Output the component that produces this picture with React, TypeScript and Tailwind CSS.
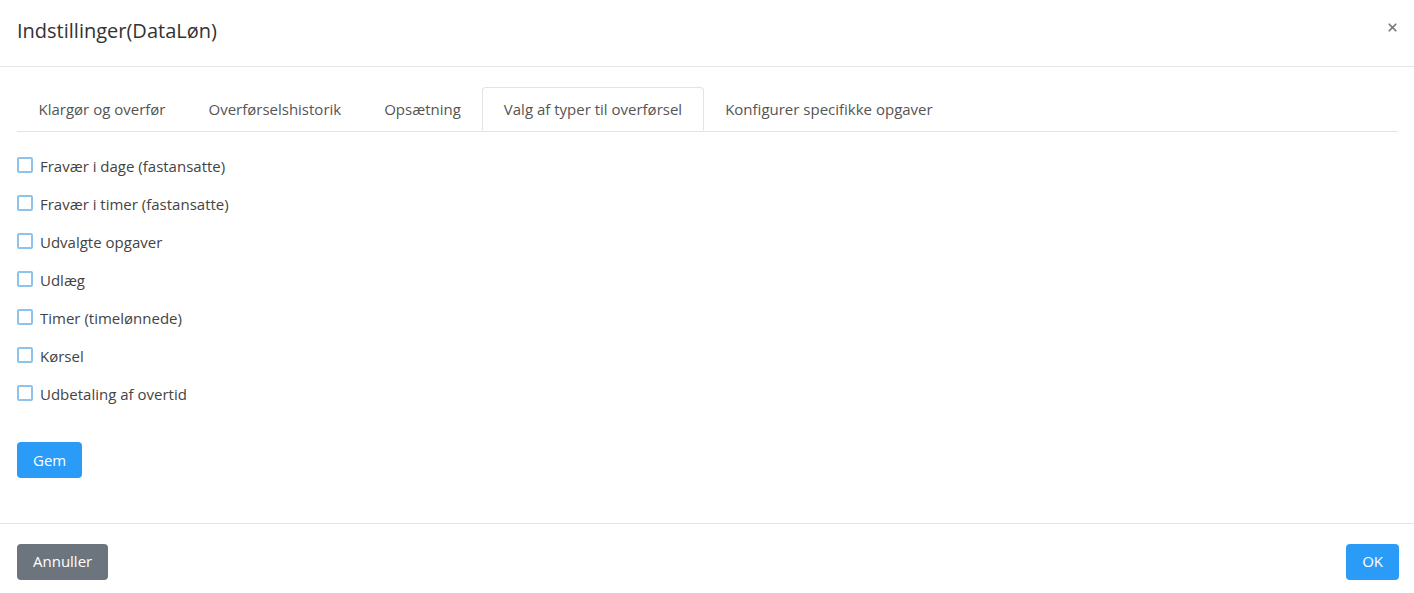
import { X } from "lucide-react";

const tabs = [
  "Klargør og overfør",
  "Overførselshistorik",
  "Opsætning",
  "Valg af typer til overførsel",
  "Konfigurer specifikke opgaver",
];

const types = [
  "Fravær i dage (fastansatte)",
  "Fravær i timer (fastansatte)",
  "Udvalgte opgaver",
  "Udlæg",
  "Timer (timelønnede)",
  "Kørsel",
  "Udbetaling af overtid",
];

export default function App() {
  const active = 3;
  return (
    <div
      className="w-[1414px] h-[593px] bg-white text-[#444] flex flex-col"
      style={{ fontFamily: '"Open Sans", "Noto Sans", sans-serif' }}
    >
      <div className="h-[67px] border-b border-[#e5e5e5] flex items-center justify-between pl-[17px] pr-[15px]">
        <h1 className="text-[20px] text-[#333] pb-[4px]">Indstillinger(DataLøn)</h1>
        <button className="text-[#777] pb-[12px]">
          <X size={13} strokeWidth={3.2} />
        </button>
      </div>

      <div className="flex-1 px-[16px] pt-[20px]">
        <div className="flex border-b border-[#e3e3e3] ml-px">
          {tabs.map((t, i) => (
            <div
              key={t}
              className={
                i === active
                  ? "h-[44px] px-[20.5px] flex items-center text-[15px] text-[#555] border border-[#e3e3e3] border-b-white rounded-t-[4px] -mb-px bg-white"
                  : "h-[44px] px-[21.5px] flex items-center text-[15px] text-[#555]"
              }
            >
              {t}
            </div>
          ))}
        </div>

        <div className="pt-[26px] flex flex-col gap-[22px] pl-px">
          {types.map((t) => (
            <label key={t} className="flex items-center gap-[7px] h-[16px] text-[15px] text-[#444]">
              <span className="w-[16px] h-[16px] border-2 border-[#8cc4ec] rounded-[2px] bg-white -mt-[2px]" />
              {t}
            </label>
          ))}
        </div>

        <button className="mt-[40px] ml-px h-[36px] px-[16px] rounded-[4px] bg-[#2a9cf8] text-white text-[15px]">
          Gem
        </button>
      </div>

      <div className="h-[70px] border-t border-[#e3e3e3] flex items-center justify-between pl-[17px] pr-[15px] pt-[6px]">
        <button className="h-[36px] px-[16px] rounded-[4px] bg-[#6c757d] text-white text-[15px]">
          Annuller
        </button>
        <button className="h-[36px] px-[16px] rounded-[4px] bg-[#2a9cf8] text-white text-[15px]">
          OK
        </button>
      </div>
    </div>
  );
}
